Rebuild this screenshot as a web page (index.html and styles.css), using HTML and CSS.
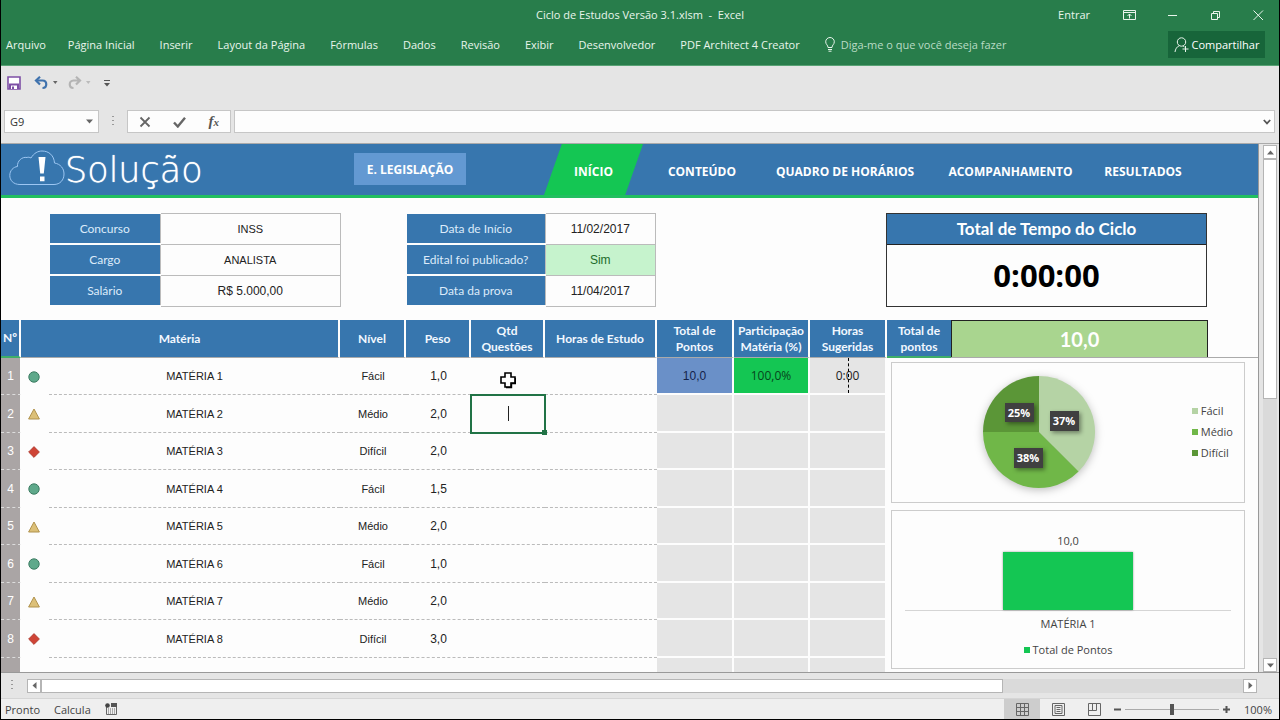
FILE: index.html
```html
<!DOCTYPE html>
<html lang="pt-BR">
<head>
    <meta charset="UTF-8">
    <meta name="viewport" content="width=device-width, initial-scale=1.0">
    <title>Ciclo de Estudos</title>
    <link rel="stylesheet" href="styles.css">
</head>
<body>
    <svg class="defs" aria-hidden="true">
        <symbol id="facil" viewBox="0 0 12 12"><circle cx="6" cy="6" r="5.2" fill="#5fa98b" stroke="#3d7d63"/></symbol>
        <symbol id="medio" viewBox="0 0 12 12"><path d="M6 1L11.4 11H.6z" fill="#dcc078" stroke="#b0924c"/></symbol>
        <symbol id="dificil" viewBox="0 0 12 12"><path d="M6 .6L11.4 6 6 11.4.6 6z" fill="#cf4436" stroke="#a93a2e" stroke-width=".8"/></symbol>
    </svg>

    <header class="ribbon">
        <div class="titlebar">
            <h1 class="title">Ciclo de Estudos Versão 3.1.xlsm &nbsp;-&nbsp; Excel</h1>
            <div class="window-buttons">
                <button class="signin">Entrar</button>
                <button aria-label="Opções da faixa"><svg width="13" height="12" viewBox="0 0 13 12"><path d="M.5 1.5h12v9H.5zM.5 3.5h12M6.500 9.500V5M4.500 7l2-2 2 2"/></svg></button>
                <button aria-label="Minimizar"><svg width="13" height="12" viewBox="0 0 13 12"><path d="M2 6.500h9"/></svg></button>
                <button aria-label="Restaurar"><svg width="13" height="12" viewBox="0 0 13 12"><path d="M2.500 4.500h6v6h-6zM4.500 4V2.500h6v6H9"/></svg></button>
                <button aria-label="Fechar"><svg width="13" height="12" viewBox="0 0 13 12"><path d="M1.500 1.500l9.500 9.500M11 1.500L1.500 11"/></svg></button>
            </div>
        </div>
        <nav class="tabs">
            <a href="#" class="file">Arquivo</a>
            <a href="#">Página Inicial</a>
            <a href="#">Inserir</a>
            <a href="#">Layout da Página</a>
            <a href="#">Fórmulas</a>
            <a href="#">Dados</a>
            <a href="#">Revisão</a>
            <a href="#">Exibir</a>
            <a href="#">Desenvolvedor</a>
            <a href="#">PDF Architect 4 Creator</a>
            <a href="#" class="tell-me">
                <svg width="10" height="15" viewBox="0 0 10 15"><path d="M3 10.500C3 8 .7 7.500.7 4.800a4.300 4.300 0 0 1 8.600 0C9.300 7.500 7 8 7 10.500zM3 12.500h4M3.500 14.200h3"/></svg>
                Diga-me o que você deseja fazer
            </a>
            <button class="share">
                <svg width="15" height="16" viewBox="0 0 15 16"><circle cx="7.500" cy="5" r="4.200"/><path d="M5.500 8.500C2.500 10 1.500 12 1 15M9 8.800l1.500 1.200M11.500 9v6M8.500 12h6"/></svg>
                Compartilhar
            </button>
        </nav>
    </header>

    <div class="quick">
        <button aria-label="Salvar"><svg width="14" height="14" viewBox="0 0 14 14"><path d="M1 1h12v12H1z" fill="#fff" stroke="#7d4fa5" stroke-width="1.600"/><path d="M2 7.500h10V13H2z" fill="#7d4fa5"/><path d="M4 9.500h6V13H4z" fill="#fff"/><path d="M5 10.500h2V13H5z" fill="#7d4fa5"/></svg></button>
        <button class="undo" aria-label="Desfazer"><svg width="24" height="14" viewBox="0 0 24 14"><path d="M2 4.500h6.500c5 0 5 7.500 0 7.500" fill="none" stroke="#3f72ad" stroke-width="2.200"/><path d="M6 .8L2 4.500l4 4" fill="none" stroke="#3f72ad" stroke-width="2.200"/><path d="M19 5h4.500l-2.200 3z" fill="#666"/></svg></button>
        <button aria-label="Refazer"><svg width="24" height="14" viewBox="0 0 24 14"><path d="M12 4.500H6.500c-5 0-5 7.500 0 7.500M9 .8l4 3.700-4 4" fill="none" stroke="#b4b4b4" stroke-width="2.200"/><path d="M19 5h4.500l-2.200 3z" fill="#bbb"/></svg></button>
        <button class="customize" aria-label="Personalizar"><svg width="6" height="8" viewBox="0 0 6 8"><path d="M0 1.500h6" stroke="#555"/><path d="M0 4h6L3 7.500z" fill="#555"/></svg></button>
    </div>

    <div class="formula-row">
        <div class="name-box">
            <input type="text" value="G9" aria-label="Caixa de nome">
            <svg width="7" height="5" viewBox="0 0 7 5"><path d="M0 .5h7L3.500 4.500z" fill="#666"/></svg>
        </div>
        <span class="grip"></span>
        <div class="formula-buttons">
            <button aria-label="Cancelar"><svg width="12" height="12" viewBox="0 0 12 12"><path d="M1.500 1.500l9 9M10.500 1.500l-9 9" stroke="#666" stroke-width="1.800"/></svg></button>
            <button aria-label="Inserir"><svg width="13" height="12" viewBox="0 0 13 12"><path d="M1 6.500l3.800 4L12 1.800" fill="none" stroke="#666" stroke-width="2.400"/></svg></button>
            <button class="fx" aria-label="Inserir função">f<small>x</small></button>
        </div>
        <div class="formula">
            <input type="text" aria-label="Barra de fórmulas">
            <svg width="8" height="6" viewBox="0 0 8 6"><path d="M.8 1L4 4.400 7.200 1" fill="none" stroke="#555" stroke-width="1.800"/></svg>
        </div>
    </div>

    <div class="workspace">
        <main class="sheet">
            <div class="menu">
                <div class="logo">
                    <svg width="56" height="36" viewBox="0 0 56 36"><path d="M11 34.500C4 34.500.8 30 .8 25.500c0-5 3.500-8.500 7.700-9C8 11 13 6.500 18 7.500c1-.5 2.500-.3 4 .5C25 3 29 1 33 1c7 0 12 4.500 12.500 12 6 1 9.500 5.500 9.500 11 0 6-4 10.500-10 10.500z" fill="none" stroke="#9cc6f2"/><path d="M29.500 7h7l-1.700 16.500h-3.600zM31 26.500h4.500v4.800H31z" fill="#fff"/></svg>
                    <span>Solução</span>
                </div>
                <button class="law">E. LEGISLAÇÃO</button>
                <nav class="pages">
                    <a href="#" class="active">INÍCIO</a>
                    <a href="#">CONTEÚDO</a>
                    <a href="#">QUADRO DE HORÁRIOS</a>
                    <a href="#">ACOMPANHAMENTO</a>
                    <a href="#">RESULTADOS</a>
                </nav>
            </div>

            <section class="info">
                <table class="facts contest">
                    <tr><th scope="row">Concurso</th><td>INSS</td></tr>
                    <tr><th scope="row">Cargo</th><td>ANALISTA</td></tr>
                    <tr><th scope="row">Salário</th><td class="num">R$ 5.000,00</td></tr>
                </table>
                <table class="facts dates">
                    <tr><th scope="row">Data de Início</th><td class="num">11/02/2017</td></tr>
                    <tr><th scope="row">Edital foi publicado?</th><td class="yes">Sim</td></tr>
                    <tr><th scope="row">Data da prova</th><td class="num">11/04/2017</td></tr>
                </table>
                <div class="total-time">
                    <h2>Total de Tempo do Ciclo</h2>
                    <p>0:00:00</p>
                </div>
            </section>

            <div class="board">
                <table class="subjects">
                    <colgroup>
                        <col class="c-n"><col class="c-icon"><col><col class="c-level"><col class="c-weight"><col class="c-qty"><col class="c-hours"><col class="c-points"><col class="c-share"><col class="c-points">
                    </colgroup>
                    <thead>
                        <tr>
                            <th class="n">Nº</th>
                            <th colspan="2">Matéria</th>
                            <th>Nível</th>
                            <th>Peso</th>
                            <th>Qtd<br>Questões</th>
                            <th>Horas de Estudo</th>
                            <th>Total de<br>Pontos</th>
                            <th>Participação<br>Matéria (%)</th>
                            <th>Horas<br>Sugeridas</th>
                        </tr>
                    </thead>
                    <tbody>
                        <tr><td class="n">1</td><td class="icon"><svg><use href="#facil"/></svg></td><td>MATÉRIA 1</td><td>Fácil</td><td class="num">1,0</td>
                            <td class="hovered"><svg class="cursor" width="16" height="18" viewBox="0 0 16 18"><path d="M5 2h6v4h4v6h-4v4H5v-4H1V6h4z" fill="#fff" stroke="#000" stroke-width="1.600"/><path d="M6 16.500h5.500V12.500H15.500V7" fill="none" stroke="#000" stroke-width="1.400"/></svg></td>
                            <td></td><td class="calc points">10,0</td><td class="calc share-full">100,0%</td><td class="calc suggested">0:00</td></tr>
                        <tr><td class="n">2</td><td class="icon"><svg><use href="#medio"/></svg></td><td>MATÉRIA 2</td><td>Médio</td><td class="num">2,0</td><td class="selected"><input type="text" aria-label="Qtd Questões"></td><td></td><td class="calc"></td><td class="calc"></td><td class="calc"></td></tr>
                        <tr><td class="n">3</td><td class="icon"><svg><use href="#dificil"/></svg></td><td>MATÉRIA 3</td><td>Difícil</td><td class="num">2,0</td><td></td><td></td><td class="calc"></td><td class="calc"></td><td class="calc"></td></tr>
                        <tr><td class="n">4</td><td class="icon"><svg><use href="#facil"/></svg></td><td>MATÉRIA 4</td><td>Fácil</td><td class="num">1,5</td><td></td><td></td><td class="calc"></td><td class="calc"></td><td class="calc"></td></tr>
                        <tr><td class="n">5</td><td class="icon"><svg><use href="#medio"/></svg></td><td>MATÉRIA 5</td><td>Médio</td><td class="num">2,0</td><td></td><td></td><td class="calc"></td><td class="calc"></td><td class="calc"></td></tr>
                        <tr><td class="n">6</td><td class="icon"><svg><use href="#facil"/></svg></td><td>MATÉRIA 6</td><td>Fácil</td><td class="num">1,0</td><td></td><td></td><td class="calc"></td><td class="calc"></td><td class="calc"></td></tr>
                        <tr><td class="n">7</td><td class="icon"><svg><use href="#medio"/></svg></td><td>MATÉRIA 7</td><td>Médio</td><td class="num">2,0</td><td></td><td></td><td class="calc"></td><td class="calc"></td><td class="calc"></td></tr>
                        <tr><td class="n">8</td><td class="icon"><svg><use href="#dificil"/></svg></td><td>MATÉRIA 8</td><td>Difícil</td><td class="num">3,0</td><td></td><td></td><td class="calc"></td><td class="calc"></td><td class="calc"></td></tr>
                        <tr><td class="n"></td><td class="icon"></td><td></td><td></td><td></td><td></td><td></td><td class="calc"></td><td class="calc"></td><td class="calc"></td></tr>
                    </tbody>
                </table>

                <aside class="summary">
                    <div class="points-total">
                        <h3>Total de<br>pontos</h3>
                        <p>10,0</p>
                    </div>
                    <div class="chart pie">
                        <svg width="140" height="138" viewBox="0 0 140 138">
                            <g class="pie-shadow">
                                <path d="M70 69V13a56 56 0 0 1 39.600 95.600z" fill="#b5d3a5"/>
                                <path d="M70 69l39.600 39.600A56 56 0 0 1 14 69z" fill="#70b748"/>
                                <path d="M70 69H14a56 56 0 0 1 56-56z" fill="#5b9637"/>
                            </g>
                            <g class="pie-label">
                                <rect x="81" y="48" width="29" height="20"/><text x="95" y="62">37%</text>
                                <rect x="45" y="85" width="29" height="20"/><text x="59" y="99">38%</text>
                                <rect x="36" y="40" width="29" height="19"/><text x="50" y="54">25%</text>
                            </g>
                        </svg>
                        <ul class="legend">
                            <li class="easy">Fácil</li>
                            <li class="medium">Médio</li>
                            <li class="hard">Difícil</li>
                        </ul>
                    </div>
                    <div class="chart bars">
                        <span>10,0</span>
                        <div class="plot"><div class="bar"></div></div>
                        <span>MATÉRIA 1</span>
                        <ul class="legend"><li class="total">Total de Pontos</li></ul>
                    </div>
                </aside>
            </div>
        </main>

        <div class="scroll-y">
            <button aria-label="Para cima"><svg width="7" height="5" viewBox="0 0 7 5"><path d="M0 4.500h7L3.500.5z"/></svg></button>
            <div class="track"><div class="thumb"></div></div>
            <button aria-label="Para baixo"><svg width="7" height="5" viewBox="0 0 7 5"><path d="M0 .5h7L3.500 4.500z"/></svg></button>
        </div>
    </div>

    <div class="scroll-x">
        <span class="grip"></span>
        <button aria-label="Para a esquerda"><svg width="5" height="7" viewBox="0 0 5 7"><path d="M4.500 0v7L.5 3.500z"/></svg></button>
        <div class="track"><div class="thumb"></div></div>
        <button aria-label="Para a direita"><svg width="5" height="7" viewBox="0 0 5 7"><path d="M.5 0v7l4-3.500z"/></svg></button>
    </div>

    <footer class="status">
        <span>Pronto</span>
        <span>Calcula</span>
        <svg width="12" height="12" viewBox="0 0 12 12"><path d="M1.500 4v7.500h10V4" fill="none" stroke="#666"/><path d="M6 0h6v4H6z" fill="#555"/><circle cx="2.500" cy="2.500" r="2.300" fill="#444"/><path d="M3 6h7M3 8h7M3 10h7" stroke="#666" stroke-dasharray="1 1"/></svg>
        <div class="views">
            <button class="on" aria-label="Normal"><svg width="13" height="13" viewBox="0 0 13 13"><path d="M.5.5h12v12H.5zM4.500.5v12M8.500.5v12M.5 4.500h12M.5 8.500h12"/></svg></button>
            <button aria-label="Layout da Página"><svg width="13" height="13" viewBox="0 0 13 13"><path d="M.5.5h12v12H.5zM3 2.500h7v8H3zM4.500 4.500h4M4.500 6.500h4M4.500 8.500h4"/></svg></button>
            <button aria-label="Quebra de Página"><svg width="13" height="13" viewBox="0 0 13 13"><path d="M.5.5h12v12H.5zM4.500.5v7M8.500.5v7M.5 7.500h8"/></svg></button>
        </div>
        <div class="zoom">
            <button aria-label="Menos zoom"><svg width="7" height="7" viewBox="0 0 7 7"><path d="M0 3.500h7"/></svg></button>
            <input type="range" min="0" max="100" value="50" aria-label="Zoom">
            <button aria-label="Mais zoom"><svg width="7" height="7" viewBox="0 0 7 7"><path d="M0 3.500h7M3.500 0v7"/></svg></button>
            <span>100%</span>
        </div>
    </footer>
</body>
</html>
```
FILE: styles.css
```css
* {
    box-sizing: border-box;
}
body {
    margin: 0;
    height: 100vh;
    display: flex;
    flex-direction: column;
    overflow: hidden;
    background: #e5e5e5;
    border: solid #000;
    border-width: 0 1px 1px;
    font-family: "Open Sans", "Noto Sans", sans-serif;
    font-size: 11px;
    color: #444;
}
button {
    padding: 0;
    border: 0;
    background: none;
    font: inherit;
    color: inherit;
    display: flex;
    align-items: center;
    justify-content: center;
}
a {
    color: inherit;
    text-decoration: none;
}
h1, h2, h3, p, ul {
    margin: 0;
    padding: 0;
    font-size: inherit;
    font-weight: inherit;
    list-style: none;
}
svg {
    display: block;
    flex: none;
}
.defs {
    position: absolute;
    width: 0;
    height: 0;
}

/* ribbon */
.ribbon {
    height: 66px;
    flex: none;
    background: #287d4b;
    border-bottom: 1px solid #58a274;
    color: #e9f5ec;
}
.ribbon svg {
    fill: none;
    stroke: #e9f5ec;
}
.titlebar {
    height: 29px;
    display: grid;
    grid-template-columns: 1fr auto 1fr;
    align-items: center;
}
.title {
    grid-column: 2;
}
.window-buttons {
    display: flex;
    justify-content: flex-end;
    gap: 30px;
    padding-right: 14px;
}
.signin {
    margin-right: 3px;
}
.tabs {
    height: 31px;
    display: flex;
    align-items: center;
    gap: 25px;
    padding: 0 14px 0 5px;
    white-space: nowrap;
}
.file {
    margin-right: -3px;
}
.tell-me {
    display: flex;
    align-items: center;
    gap: 6px;
    color: #b9dcc5;
}
.share {
    margin-left: auto;
    width: 97px;
    height: 27px;
    gap: 3px;
    background: #17653a;
    color: #fff;
}

/* quick access and formula bar */
.quick {
    height: 44px;
    flex: none;
    display: flex;
    align-items: center;
    gap: 9px;
    padding: 0 6px 10px;
}
.undo {
    margin-left: 4px;
}
.customize {
    margin-left: 4px;
}
.formula-row {
    height: 34px;
    flex: none;
    display: flex;
    padding: 0 4px 10px 3px;
    border-bottom: 1px solid #aaa;
}
.name-box, .formula-buttons, .formula {
    display: flex;
    align-items: center;
    background: #fdfdfd;
    border: 1px solid #c6c6c6;
}
.name-box {
    width: 95px;
    padding-right: 5px;
}
.name-box input, .formula input {
    flex: 1;
    min-width: 0;
    padding: 0 5px;
    border: 0;
    outline: 0;
    background: none;
    font: inherit;
    color: #333;
}
.grip {
    width: 2px;
    height: 11px;
    margin: auto 13px;
    background: repeating-linear-gradient(#999 0 1px, transparent 1px 4px);
}
.formula-buttons {
    width: 104px;
    justify-content: space-between;
    padding: 0 11px;
}
.fx {
    font: italic bold 15px "Liberation Serif", serif;
    color: #555;
}
.fx small {
    font-size: 11px;
}
.formula {
    flex: 1;
    margin-left: 3px;
    padding-right: 3px;
}

/* worksheet */
.workspace {
    flex: 1;
    min-height: 0;
    display: flex;
}
.sheet {
    flex: 1;
    overflow: hidden;
    background: #fdfdfd;
    border-right: 1px solid #999;
    font-family: "Liberation Sans", Arial, sans-serif;
    color: #222;
}
.menu {
    height: 54px;
    display: flex;
    background: #3776ae;
    border-bottom: 3px solid #22bf60;
    color: #fff;
    font: bold 12px "Open Sans", sans-serif;
}
.logo {
    width: 353px;
    display: flex;
    align-items: center;
    padding: 0 0 3px 8px;
    font: 200 35px "DejaVu Sans Light", "DejaVu Sans", sans-serif;
    line-height: 40px;
    text-shadow: 0 0 1px #fff;
}
.logo span {
    padding-top: 3px;
}
.law {
    width: 112px;
    height: 32px;
    margin-top: 9px;
    background: #6399d2;
}
.pages {
    height: 51px;
    overflow: hidden;
    margin-left: auto;
    margin-right: 64px;
    display: grid;
    grid-template-columns: 99px 118px 168px 163px 102px;
    grid-template-rows: 51px;
    text-align: center;
    line-height: 55px;
}
.pages .active {
    background: #14c653;
    clip-path: polygon(18% 0, 100% 0, 82% 100%, 0 100%);
}
.info {
    display: flex;
    align-items: flex-start;
    padding: 15px 51px 13px 49px;
}
.facts {
    border-collapse: collapse;
    table-layout: fixed;
    margin-top: -1px;
    font-size: 11px;
    text-align: center;
}
.contest {
    width: 291px;
}
.dates {
    width: 249px;
    margin-left: 66px;
}
.facts tr {
    height: 31px;
}
.facts th {
    width: 110px;
    padding: 0;
    background: #3776ae;
    border: solid #fdfdfd;
    border-width: 2px 0;
    color: #dcebfa;
    font: 12px Lato, sans-serif;
}
.dates th {
    width: 138px;
}
.facts td {
    padding: 0;
    border: 1px solid #bbb;
}
.facts .num, .facts .yes {
    font-size: 12px;
}
.facts .yes {
    background: #c6f3cd;
    color: #1c6b2a;
}
.total-time {
    width: 321px;
    height: 94px;
    margin-left: auto;
    border: 1px solid #333;
    text-align: center;
    font-family: Lato, sans-serif;
    font-weight: bold;
}
.total-time h2 {
    height: 31px;
    background: #3776ae;
    border-bottom: 1px solid #222;
    color: #fff;
    font-size: 17px;
    line-height: 30px;
}
.total-time p {
    color: #000;
    font: bold 31px/60px "Open Sans", sans-serif;
}
.board {
    display: flex;
    align-items: flex-start;
}

/* subjects table */
.subjects {
    flex: 1;
    width: 0;
    border-collapse: separate;
    border-spacing: 0;
    table-layout: fixed;
    font-size: 11px;
    text-align: center;
}
.c-n { width: 20px; }
.c-icon { width: 28px; }
.c-level { width: 66px; }
.c-weight { width: 65px; }
.c-qty { width: 74px; }
.c-hours { width: 112px; }
.c-points { width: 77px; }
.c-share { width: 76px; }
.subjects th {
    height: 38px;
    padding: 0;
    background: #3776ae;
    border-right: 2px solid #fdfdfd;
    border-bottom: 1px solid #aaa;
    color: #f2f8ff;
    font: bold 12px/16px Lato, sans-serif;
}
.subjects th.n {
    border-bottom: 2px solid #3fae68;
}
.subjects td {
    height: 37px;
    padding: 0;
    border-bottom: 1px dashed #bbb;
}
.subjects tr:nth-child(even) td {
    height: 38px;
}
.subjects td.n {
    background: #aaa5a5;
    border-right: 1px solid #fdfdfd;
    border-bottom-color: #ddd;
    color: #fff;
    font-size: 12px;
}
.subjects td.icon {
    border-bottom: 0;
}
.subjects .icon svg {
    width: 12px;
    height: 12px;
    margin: 0 7px;
}
.subjects .num {
    font-size: 12px;
}
.subjects td.calc {
    background: #e5e5e5;
    border-right: 2px solid #fdfdfd;
    border-bottom: 2px solid #fdfdfd;
    font-family: "Open Sans", sans-serif;
    font-size: 12px;
}
.subjects td.points {
    background: #6a90c8;
    color: #14234a;
    font-family: "Liberation Sans", sans-serif;
}
.subjects td.share-full {
    background: #14c653;
    color: #06451c;
}
.hovered, .selected, .suggested {
    position: relative;
}
.cursor {
    position: absolute;
    top: 13px;
    left: 29px;
}
.suggested::after {
    content: "";
    position: absolute;
    top: 0;
    bottom: 0;
    left: 50%;
    border-left: 1px dashed #000;
}
.selected::before {
    content: "";
    position: absolute;
    inset: -1px -1px -2px;
    border: 2px solid #217346;
}
.selected::after {
    content: "";
    position: absolute;
    right: -2px;
    bottom: -3px;
    width: 5px;
    height: 5px;
    background: #217346;
}
.selected input {
    display: block;
    width: 1px;
    height: 15px;
    margin: 0 auto;
    padding: 0;
    border: 0;
    background: #222;
}

/* right side */
.summary {
    width: 371px;
}
.points-total {
    height: 38px;
    display: flex;
    border-bottom: 1px solid #aaa;
    text-align: center;
    font-family: Lato, sans-serif;
    font-weight: bold;
}
.points-total h3 {
    width: 64px;
    height: 38px;
    padding-top: 3px;
    background: #3776ae;
    border-bottom: 2px solid #3fae68;
    color: #f2f8ff;
    font-size: 12px;
    line-height: 16px;
}
.points-total p {
    width: 257px;
    background: #a9d58f;
    border: 1px solid #222;
    border-bottom: 0;
    color: #fff;
    font-size: 20px;
    line-height: 36px;
}
.chart {
    width: 354px;
    margin-left: 4px;
    border: 1px solid #ccc;
    font-family: "Open Sans", sans-serif;
    color: #444;
}
.pie {
    height: 141px;
    margin-top: 4px;
    display: flex;
    justify-content: space-between;
    align-items: center;
    padding: 0 11px 2px 77px;
}
.pie-shadow {
    filter: drop-shadow(0 2px 4px rgba(0, 0, 0, 0.25));
}
.pie-label {
    font: bold 11px "Open Sans", sans-serif;
    text-anchor: middle;
    fill: #fff;
}
.pie-label rect {
    fill: #404040;
    filter: drop-shadow(2px 2px 2px rgba(0, 0, 0, 0.4));
}
.legend li {
    display: flex;
    align-items: center;
    gap: 3px;
    line-height: 21px;
}
.legend li::before {
    content: "";
    width: 6px;
    height: 6px;
    background: #14c653;
}
.legend .easy::before { background: #b5d3a5; }
.legend .medium::before { background: #70b748; }
.legend .hard::before { background: #5b9637; }
.bars {
    height: 159px;
    margin-top: 7px;
    padding: 19px 13px 0;
    display: flex;
    flex-direction: column;
    align-items: center;
}
.bars span {
    line-height: 22px;
}
.plot {
    width: 100%;
    border-bottom: 1px solid #d5d5d5;
    margin-bottom: 2px;
}
.bar {
    width: 40%;
    height: 58px;
    margin: 0 auto;
    background: #14c653;
    box-shadow: 0 0 2px rgba(0, 0, 0, 0.4);
}
.bars .legend {
    margin-top: 4px;
}

/* scrollbars */
.scroll-y {
    width: 20px;
    display: flex;
    flex-direction: column;
    padding: 1px 2px 0 4px;
}
.track {
    flex: 1;
    background: #dadada;
}
.thumb {
    background: #fff;
    border: 1px solid #b5b5b5;
}
.scroll-y .thumb {
    height: 48%;
}
.scroll-y button, .scroll-x button {
    width: 14px;
    height: 14px;
    background: #fff;
    border: 1px solid #b5b5b5;
    fill: #666;
}
.scroll-x {
    height: 26px;
    flex: none;
    display: flex;
    align-items: center;
    padding: 0 22px 0 10px;
    border-top: 1px solid #999;
}
.scroll-x .grip {
    margin: 0 14px 0 0;
}
.scroll-x .thumb {
    width: 80%;
    height: 14px;
}

/* status bar */
.status {
    height: 21px;
    flex: none;
    display: flex;
    align-items: center;
    gap: 14px;
    padding: 0 7px 0 4px;
    background: #efefef;
    border-top: 1px solid #d5d5d5;
}
.views {
    margin-left: auto;
    display: flex;
    height: 100%;
}
.views button {
    width: 36px;
}
.views .on {
    background: #cdcdcd;
}
.views svg {
    fill: none;
    stroke: #666;
}
.zoom {
    display: flex;
    align-items: center;
    gap: 4px;
    margin-left: -12px;
}
.zoom svg {
    stroke: #555;
    stroke-width: 2;
}
.zoom span {
    margin-left: 10px;
}
.zoom input {
    width: 94px;
    height: 12px;
    margin: 0;
    appearance: none;
    background: linear-gradient(#aaa, #aaa) center / 100% 1px no-repeat;
}
.zoom input::-webkit-slider-thumb {
    appearance: none;
    width: 4px;
    height: 11px;
    background: #555;
}
```
